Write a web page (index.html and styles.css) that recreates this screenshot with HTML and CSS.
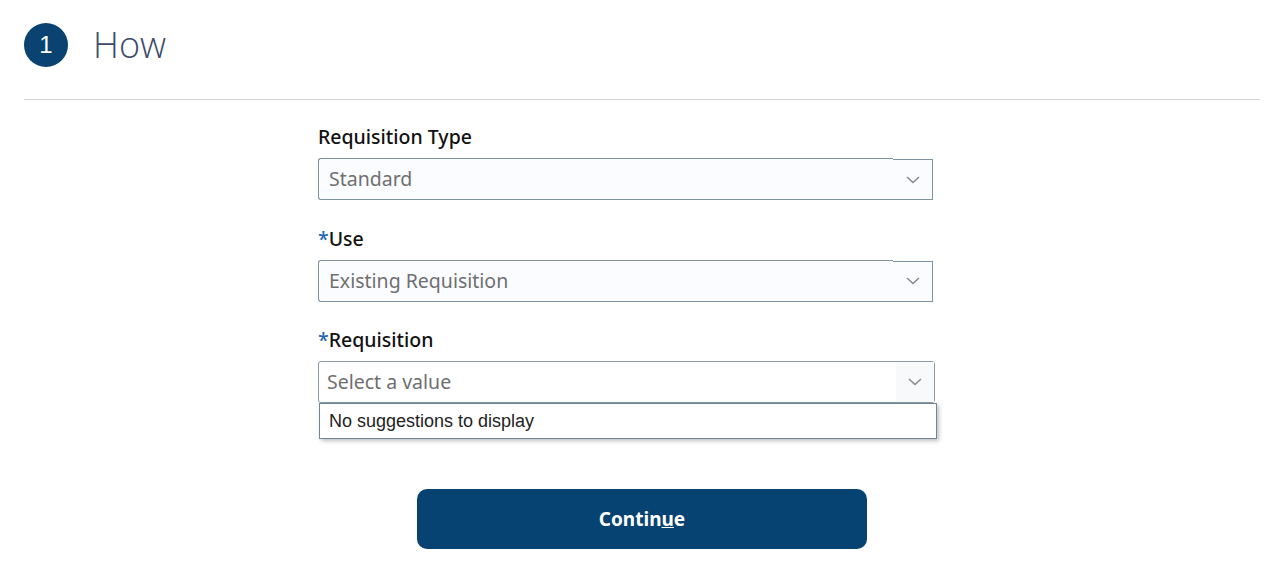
FILE: index.html
```html
<!DOCTYPE html>
<html lang="en">
<head>
    <meta charset="UTF-8">
    <meta name="viewport" content="width=device-width, initial-scale=1.0">
    <title>How</title>
    <link rel="stylesheet" href="styles.css">
</head>
<body>
<div class="page">
    <!-- step header -->
    <div class="step">
        <span class="step-num">1</span>
        <h1 class="step-title">How</h1>
    </div>
    <hr class="rule"/>

    <form class="form">
        <div class="field">
            <label class="label">Requisition Type</label>
            <div class="select">
                <div class="select-text">Standard</div>
                <div class="select-btn">
                    <svg width="14" height="8" viewBox="0 0 14 8"><path d="M1 1 L7 6.5 L13 1" fill="none" stroke="#8a8a8a" stroke-width="1.6"/></svg>
                </div>
            </div>
        </div>

        <div class="field">
            <label class="label"><span class="req">*</span>Use</label>
            <div class="select">
                <div class="select-text">Existing Requisition</div>
                <div class="select-btn">
                    <svg width="14" height="8" viewBox="0 0 14 8"><path d="M1 1 L7 6.5 L13 1" fill="none" stroke="#8a8a8a" stroke-width="1.6"/></svg>
                </div>
            </div>
        </div>

        <div class="field">
            <label class="label"><span class="req">*</span>Requisition</label>
            <div class="combo">
                <div class="combo-text">Select a value</div>
                <div class="combo-btn">
                    <svg width="14" height="8" viewBox="0 0 14 8"><path d="M1 1 L7 6.5 L13 1" fill="none" stroke="#8a8a8a" stroke-width="1.6"/></svg>
                </div>
            </div>
            <div class="suggest">No suggestions to display</div>
        </div>

        <div class="actions">
            <button class="btn" type="button">Contin<u>u</u>e</button>
        </div>
    </form>
</div>
</body>
</html>
```

FILE: styles.css
```css
body{
    margin: 0;
    background: #ffffff;
    font-family: "Noto Sans", "Open Sans", sans-serif;
    color: #161616;
}
.page{
    padding: 23px 16px 0 24px;
}
.step{
    display: flex;
    align-items: center;
    height: 44px;
}
.step-num{
    width: 44px;
    height: 44px;
    border-radius: 50%;
    background: #0a4271;
    color: #ffffff;
    font-family: "Liberation Sans", Arial, sans-serif;
    font-size: 24px;
    display: flex;
    align-items: center;
    justify-content: center;
}
.step-title{
    margin: 0 0 0 25px;
    font-family: "Open Sans", sans-serif;
    font-weight: 300;
    font-size: 36px;
    color: #3d4a6c;
    line-height: 44px;
}
.rule{
    margin: 32px 0 0 0;
    border: none;
    border-top: 1px solid #d4d4d4;
}
.form{
    width: 615px;
    margin: 0 0 0 294px;
    padding-top: 23px;
}
.field{
    margin-bottom: 24.5px;
}
.label{
    display: block;
    font-size: 19.5px;
    font-weight: 500;
    color: #111111;
    line-height: 27px;
    margin-bottom: 8px;
}
.req{
    color: #2266b3;
}
.select{
    display: flex;
    height: 42px;
}
.select-text{
    flex: 1;
    border: 1px solid #7f939e;
    border-right: none;
    border-radius: 3px 0 0 3px;
    background: #fafcff;
    color: #6f6f6f;
    font-size: 19.5px;
    line-height: 40px;
    padding-left: 10px;
}
.select-btn{
    width: 39px;
    margin-top: 1px;
    border: 1px solid #7f939e;
    border-left: none;
    background: #fafcff;
    display: flex;
    align-items: center;
    justify-content: center;
}
.combo{
    display: flex;
    height: 40px;
    width: 615px;
    border: 1px solid #8a9aa6;
    border-radius: 3px;
    background: #ffffff;
}
.combo-text{
    flex: 1;
    color: #6f6f6f;
    font-size: 19.5px;
    line-height: 40px;
    padding-left: 8px;
}
.combo-btn{
    width: 38px;
    background: #f8f9fa;
    display: flex;
    align-items: center;
    justify-content: center;
}
.suggest{
    width: 607px;
    margin-left: 1px;
    height: 34px;
    border: 1px solid #6f8799;
    box-shadow: 2px 2px 4px rgba(0, 0, 0, 0.25);
    font-family: "Liberation Sans", Arial, sans-serif;
    font-size: 18px;
    color: #222222;
    line-height: 34px;
    padding-left: 9px;
    background: #ffffff;
}
.actions{
    display: flex;
    padding-top: 25px;
    padding-left: 99px;
}
.btn{
    width: 450px;
    height: 60px;
    border: none;
    border-radius: 10px;
    background: #064372;
    color: #ffffff;
    font-family: "Noto Sans", "Open Sans", sans-serif;
    font-size: 19px;
    font-weight: 700;
}
```
